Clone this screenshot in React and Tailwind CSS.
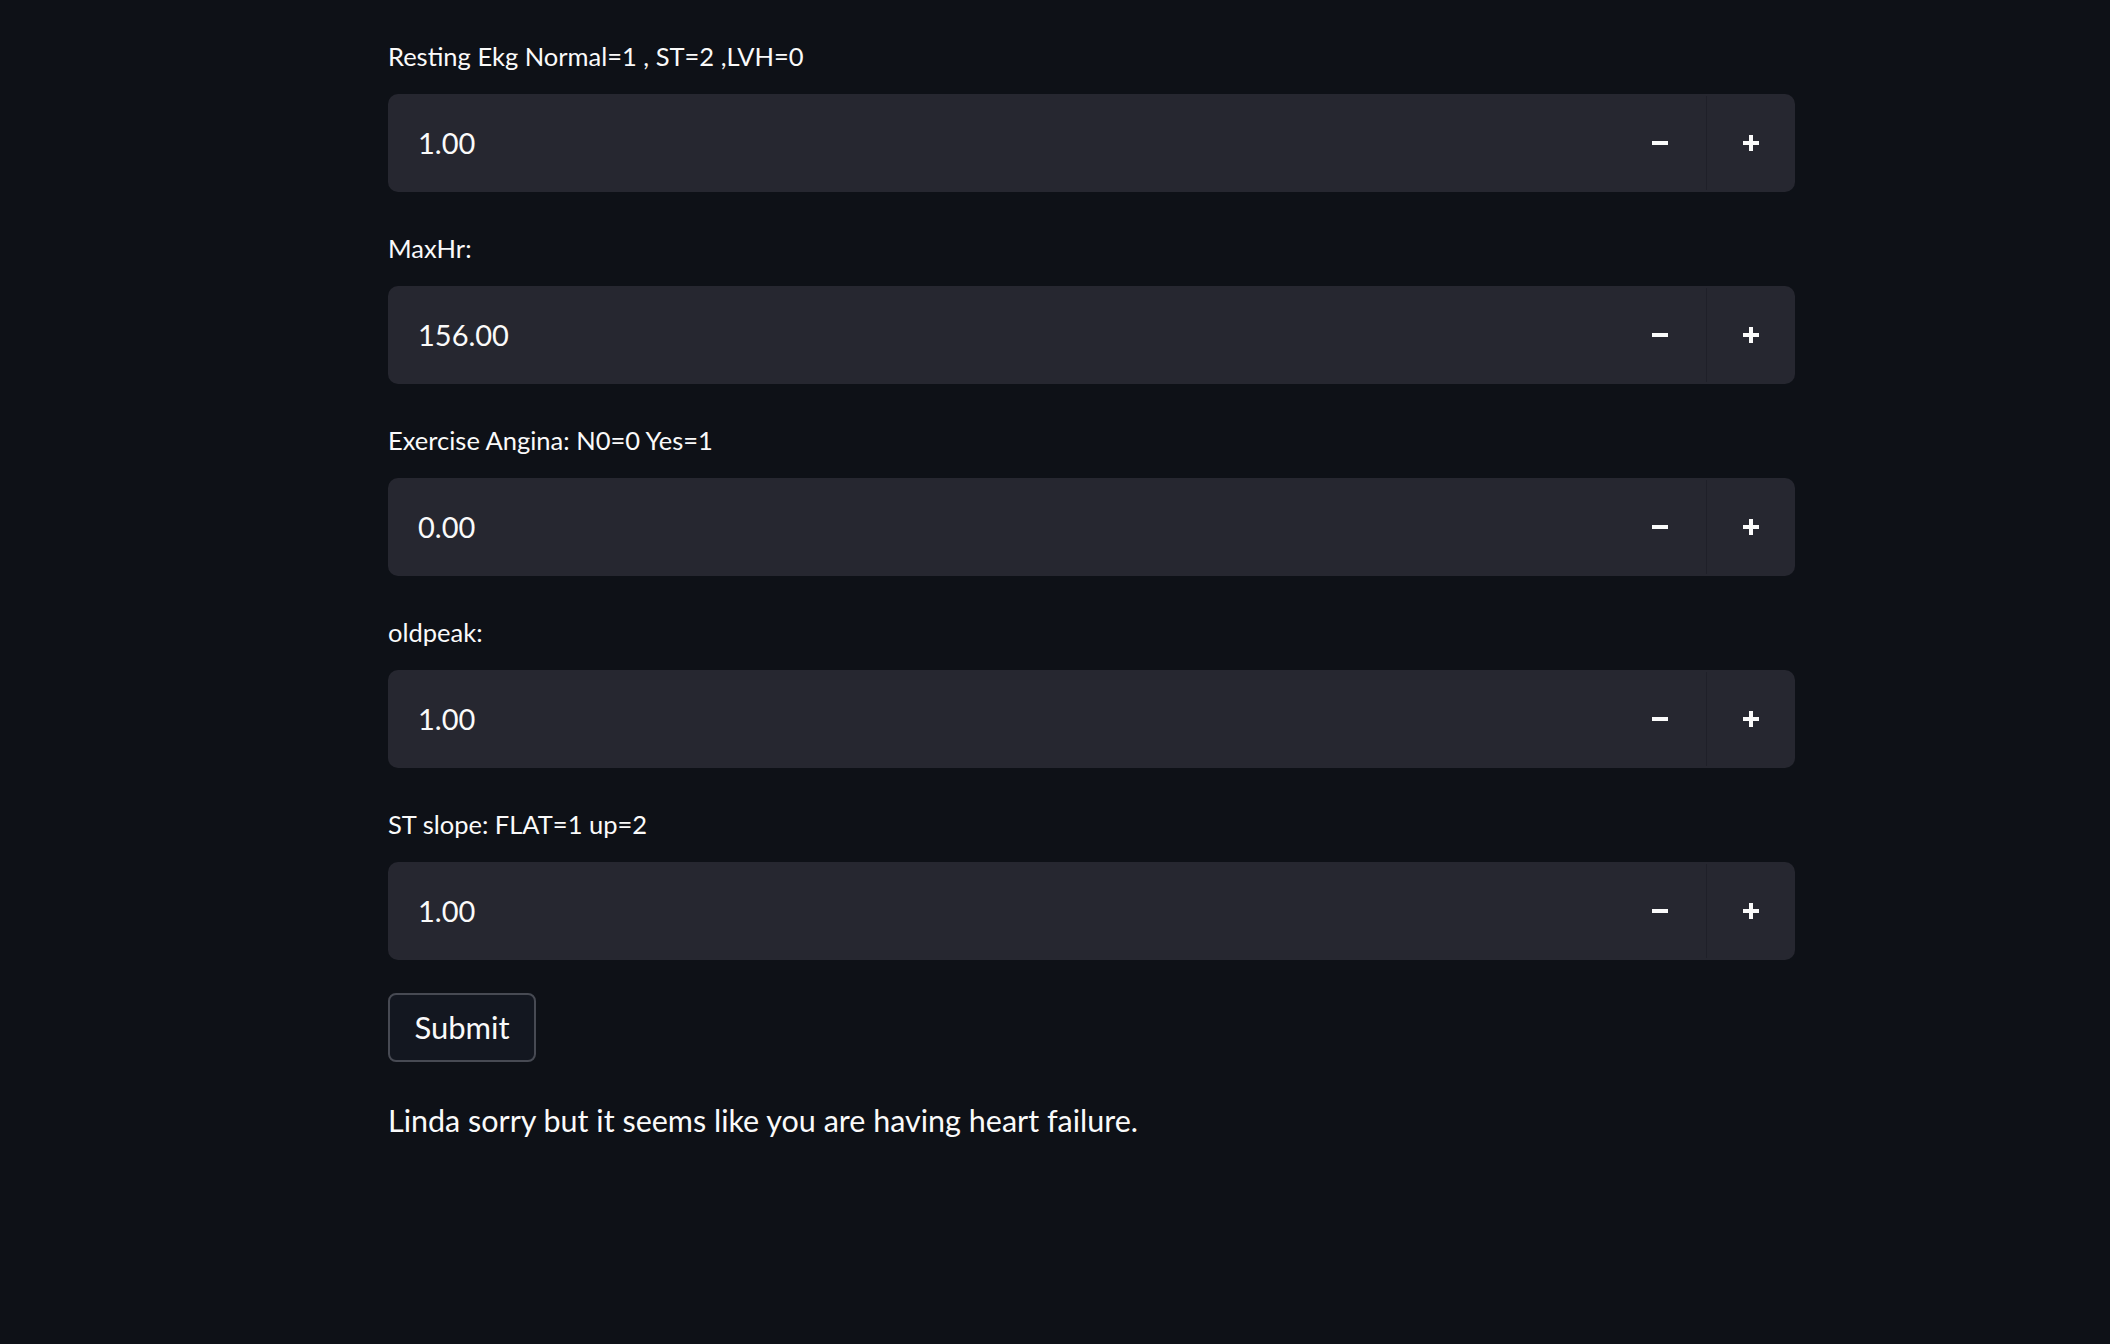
import React, { useState } from 'react';

const fields = [
  { label: 'Resting Ekg Normal=1 , ST=2 ,LVH=0', value: 1 },
  { label: 'MaxHr:', value: 156 },
  { label: 'Exercise Angina: N0=0 Yes=1', value: 0 },
  { label: 'oldpeak:', value: 1 },
  { label: 'ST slope: FLAT=1 up=2', value: 1 },
];

function NumberField({ label, initial }) {
  const [val, setVal] = useState(initial);
  return (
    <div className="flex flex-col">
      <div className="h-[40px] leading-[40px] text-[25.5px] text-[#fafafa]">{label}</div>
      <div className="mt-[18px] flex h-[98px] rounded-[10px] bg-[#262730]">
        <div className="flex flex-1 items-center pl-[30px] text-[29px] text-[#fafafa]">
          {val.toFixed(2)}
        </div>
        <button
          onClick={() => setVal(v => v - 1)}
          className="flex w-[92px] items-center justify-center"
        >
          <span className="block h-[4px] w-[16px] bg-[#fafafa]" />
        </button>
        <div className="my-[2px] w-px bg-[#1f2029]" />
        <button
          onClick={() => setVal(v => v + 1)}
          className="relative flex w-[88px] items-center justify-center"
        >
          <span className="absolute h-[4px] w-[16px] bg-[#fafafa]" />
          <span className="absolute h-[16px] w-[4px] bg-[#fafafa]" />
        </button>
      </div>
    </div>
  );
}

export default function App() {
  return (
    <div className="min-h-screen bg-[#0e1117] pt-[36px]" style={{ fontFamily: 'Lato, "Noto Sans", sans-serif' }}>
      <div className="ml-[388px] flex w-[1407px] flex-col gap-[36px]">
        {fields.map(f => (
          <NumberField key={f.label} label={f.label} initial={f.value} />
        ))}
      </div>
      <div className="ml-[388px] mt-[33px] flex flex-col">
        <button className="flex h-[69px] w-[148px] items-center justify-center rounded-[8px] border-2 border-[#474a53] bg-[#131720] text-[31px] text-[#fafafa]">
          Submit
        </button>
        <p className="mt-[34px] h-[48px] leading-[48px] text-[30.5px] text-[#fafafa]">
          Linda sorry but it seems like you are having heart failure.
        </p>
      </div>
    </div>
  );
}
